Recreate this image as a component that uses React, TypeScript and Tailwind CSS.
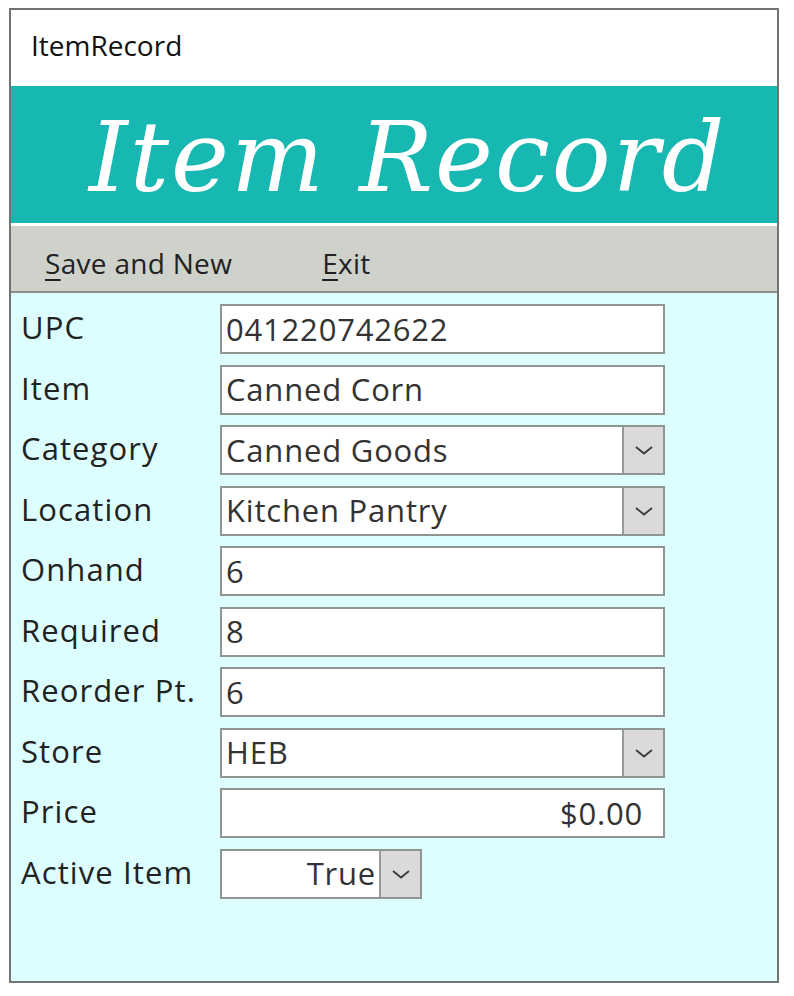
import React from "react";

type Field = {
  label: string;
  value: string;
  kind?: "text" | "combo";
  align?: "left" | "right";
};

const fields: Field[] = [
  { label: "UPC", value: "041220742622" },
  { label: "Item", value: "Canned Corn" },
  { label: "Category", value: "Canned Goods", kind: "combo" },
  { label: "Location", value: "Kitchen Pantry", kind: "combo" },
  { label: "Onhand", value: "6" },
  { label: "Required", value: "8" },
  { label: "Reorder Pt.", value: "6" },
  { label: "Store", value: "HEB", kind: "combo" },
  { label: "Price", value: "$0.00", align: "right" },
];

function Chevron() {
  return (
    <svg width="20" height="12" viewBox="0 0 20 12" fill="none">
      <polyline points="2,3 10,9.5 18,3" stroke="#3a3a3a" strokeWidth="1.8" />
    </svg>
  );
}

function DropButton() {
  return (
    <div className="w-[41px] h-full flex items-center justify-center bg-[#dcd9da] border-l-2 border-[#979c98]">
      <Chevron />
    </div>
  );
}

function Row({ label, value, kind = "text", align = "left" }: Field) {
  return (
    <div className="flex items-center h-[50px]">
      <div className="w-[209px] pl-[10px] pb-[3px] text-[31px] text-[#222] tracking-[1.1px]">{label}</div>
      <div className="w-[445px] h-full flex border-2 border-[#8f9691] bg-white">
        <div
          className={`flex-1 flex items-center px-[4px] text-[31px] text-[#333] tracking-[0.8px] ${
            align === "right" ? "justify-end pr-[20px]" : ""
          }`}
        >
          {value}
        </div>
        {kind === "combo" && <DropButton />}
      </div>
    </div>
  );
}

export default function App() {
  return (
    <div className="w-[794px] h-[996px] bg-white pt-[8px] pl-[9px]" style={{ fontFamily: '"Open Sans", sans-serif' }}>
      <div className="w-[770px] h-[975px] border-2 border-[#737373] flex flex-col">
        <div className="h-[76px] flex items-center pl-[20px] pb-[6px] text-[28px] text-[#111] bg-white">
          ItemRecord
        </div>

        <div className="h-[137px] bg-[#17b7b2] flex items-center pl-[78px] pt-[4px]">
          <span
            className="text-white italic text-[98px] leading-none tracking-[2px]"
            style={{ fontFamily: '"DejaVu Serif", serif' }}
          >
            Item Record
          </span>
        </div>

        <div className="h-[3px] bg-white" />

        <div className="h-[67px] bg-[#cfd1cb] border-b-2 border-[#8b8e8a] flex items-center pl-[34px] pt-[8px] gap-[90px] text-[28px] text-[#222] tracking-[0.3px]">
          <span>
            <span className="underline underline-offset-[5px] decoration-2">S</span>ave and New
          </span>
          <span>
            <span className="underline underline-offset-[5px] decoration-2">E</span>xit
          </span>
        </div>

        <div className="flex-1 bg-[#dcfeff] pt-[11px] flex flex-col gap-[10.5px]">
          {fields.map((f) => (
            <Row key={f.label} {...f} />
          ))}
          <div className="flex items-center h-[50px]">
            <div className="w-[209px] pl-[10px] pb-[3px] text-[31px] text-[#222] tracking-[1.1px]">Active Item</div>
            <div className="w-[202px] h-full flex border-2 border-[#8f9691] bg-white">
              <div className="flex-1 flex items-center justify-end pr-[3px] text-[31px] text-[#333] tracking-[0.8px]">
                True
              </div>
              <DropButton />
            </div>
          </div>
        </div>
      </div>
    </div>
  );
}
